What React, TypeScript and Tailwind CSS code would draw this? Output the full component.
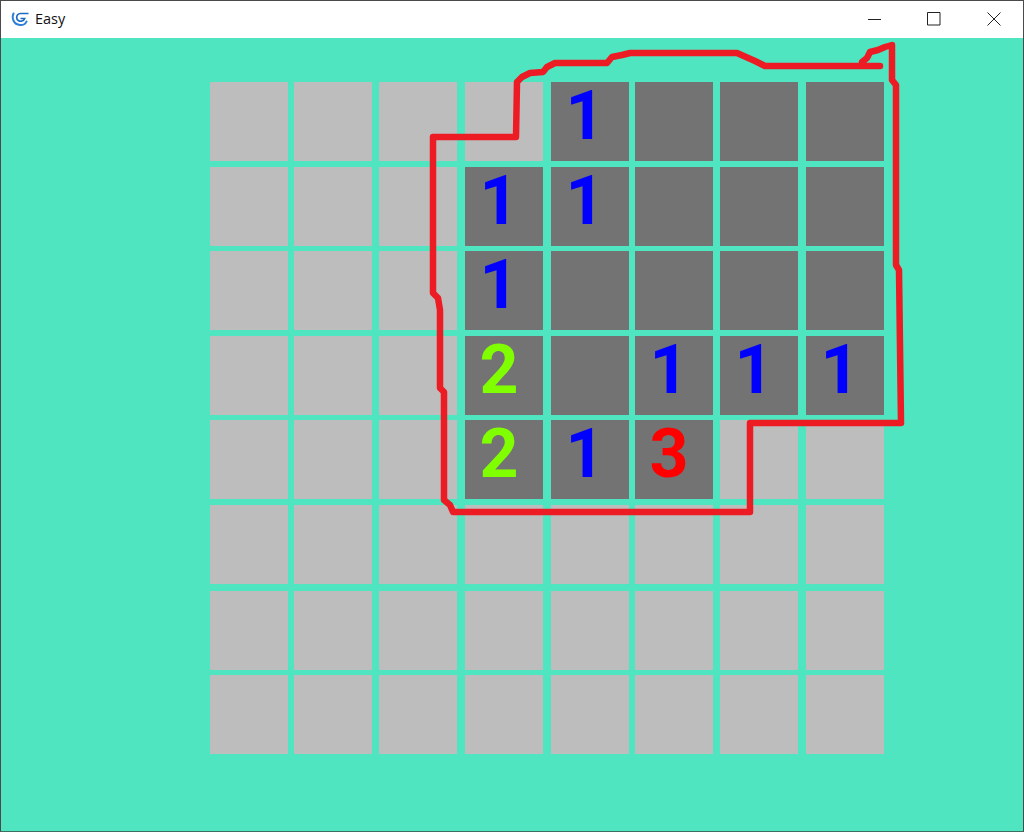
import React from 'react';

// 8x8 board, null = not revealed yet, '' = revealed and empty
const board: (string | number | null)[][] = [
  [null, null, null, null, 1, '', '', ''],
  [null, null, null, 1, 1, '', '', ''],
  [null, null, null, 1, '', '', '', ''],
  [null, null, null, 2, '', 1, 1, 1],
  [null, null, null, 2, 1, 3, null, null],
  [null, null, null, null, null, null, null, null],
  [null, null, null, null, null, null, null, null],
  [null, null, null, null, null, null, null, null],
];

const digitColor = (n: string | number | null) => {
  if (n === 1) return 'text-[#0000ff]';
  if (n === 2) return 'text-[#80ff00]';
  return 'text-[#ff0000]';
};

const lassoPoints =
  '880,66 765,66 755,61 737,53 630,53 622,55 612,57 607,63 555,63 547,67 543,72 530,73 522,77 517,82 516,137 433,137 433,293 438,298 440,310 440,388 444,392 444,500 450,505 453,512 750,512 750,423 901,423 899,270 896,265 896,85 892,80 892,45 885,47 878,50 870,52 867,58 862,62 862,65';

const AppIcon = () => (
  <svg width="18" height="14" viewBox="0 0 18 14" fill="none">
    <path d="M2.5 1.5C.5 6 2.5 12.5 9 13c3 .2 5.5-1 6.5-3.5" stroke="#2f7fd6" strokeWidth="2" strokeLinecap="round" />
    <path d="M17.5 1.5H9.5C7 1.5 5.5 3.5 5.7 5.8c.3 2.4 2.4 3.7 4.7 3.4 1.6-.2 2.8-1.2 3.3-2.7H9.5" stroke="#1c6cc4" strokeWidth="1.7" />
  </svg>
);

export default function App() {
  return (
    <div className="relative w-[1024px] h-[832px] flex flex-col overflow-hidden bg-[#50e5c1] border border-[#4a4a4a] border-b-[#3c6f62] font-['Roboto',sans-serif]">
      <div className="h-[37px] shrink-0 bg-white flex items-center">
        <div className="ml-[10px] mt-[-2px] w-[18px] flex">
          <AppIcon />
        </div>
        <span className="ml-[6px] mt-[-1px] text-[14.5px] text-[#111] font-['Open_Sans',sans-serif]">Easy</span>
        <div className="ml-auto mr-[22px] mt-[-1px] flex items-center gap-[46px]">
          <svg width="13" height="13" viewBox="0 0 13 13" stroke="#222" fill="none"><path d="M0 6.5h13" /></svg>
          <svg width="14" height="14" viewBox="0 0 14 14" stroke="#222" fill="none"><path d="M.5.5h12.5v12.5H.5z" /></svg>
          <svg width="14" height="14" viewBox="0 0 14 14" stroke="#222" fill="none"><path d="M.5.5l13 13M13.5.5l-13 13" /></svg>
        </div>
      </div>

      <div className="pl-[209px] pt-[44px]">
        <div className="grid grid-cols-[84px_85px_86px_86px_84px_85px_86px_78px] grid-rows-[85px_84px_85px_84px_85px_86px_84px_79px] w-fit">
          {board.flatMap((row, r) =>
            row.map((cell, c) => (
              <div
                key={`${r}-${c}`}
                className={`w-[78px] h-[79px] pr-[10px] pb-[11px] flex items-center justify-center text-[68px] leading-none font-bold ${
                  cell === null ? 'bg-[#bdbdbd]' : 'bg-[#737373]'
                } ${digitColor(cell)}`}
              >
                {cell}
              </div>
            ))
          )}
        </div>
      </div>

      <svg className="absolute -left-px -top-px pointer-events-none" width="1024" height="832" fill="none">
        <polyline points={lassoPoints} stroke="#ed1c24" strokeWidth="6.5" strokeLinejoin="round" strokeLinecap="round" />
      </svg>
    </div>
  );
}
